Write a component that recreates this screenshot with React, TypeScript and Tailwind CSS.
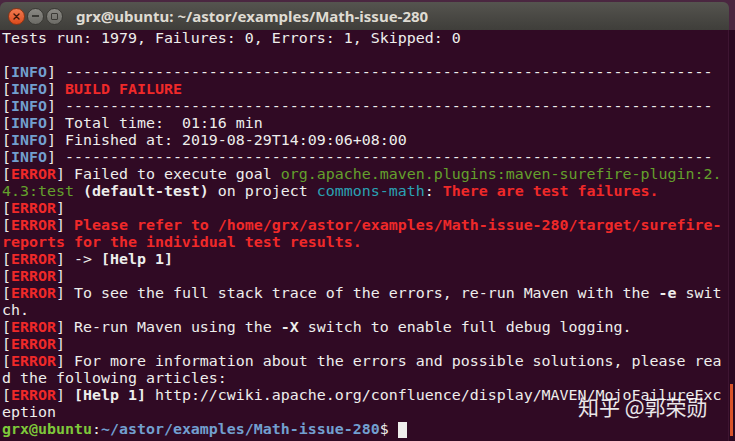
import React from 'react';

type Seg = { t: string; c?: string };

const W = 'text-[#eeeeec]';
const B = 'text-[#eeeeec] font-bold';
const INFO = 'text-[#729fcf] font-bold';
const RED = 'text-[#ef2929] font-bold';
const GREEN = 'text-[#64a02c]';
const CYAN = 'text-[#2aa1b3]';
const PGREEN = 'text-[#7ec83a] font-bold';

const dashes = '-'.repeat(72);

const info = (rest: Seg[]): Seg[] => [{ t: '[' }, { t: 'INFO', c: INFO }, { t: '] ' }, ...rest];
const err = (rest: Seg[]): Seg[] => [{ t: '[' }, { t: 'ERROR', c: RED }, { t: ']' + (rest.length ? ' ' : '') }, ...rest];

const lines: Seg[][] = [
  [{ t: 'Tests run: 1979, Failures: 0, Errors: 1, Skipped: 0' }],
  [],
  info([{ t: dashes }]),
  info([{ t: 'BUILD FAILURE', c: RED }]),
  info([{ t: dashes }]),
  info([{ t: 'Total time:  01:16 min' }]),
  info([{ t: 'Finished at: 2019-08-29T14:09:06+08:00' }]),
  info([{ t: dashes }]),
  err([{ t: 'Failed to execute goal ' }, { t: 'org.apache.maven.plugins:maven-surefire-plugin:2.', c: GREEN }]),
  [
    { t: '4.3:test', c: GREEN },
    { t: ' ' },
    { t: '(default-test)', c: B },
    { t: ' on project ' },
    { t: 'commons-math', c: CYAN },
    { t: ': ' },
    { t: 'There are test failures.', c: RED },
  ],
  err([]),
  err([{ t: 'Please refer to /home/grx/astor/examples/Math-issue-280/target/surefire-', c: RED }]),
  [{ t: 'reports for the individual test results.', c: RED }],
  err([{ t: '-> ' }, { t: '[Help 1]', c: B }]),
  err([]),
  err([
    { t: 'To see the full stack trace of the errors, re-run Maven with the ' },
    { t: '-e', c: B },
    { t: ' swit' },
  ]),
  [{ t: 'ch.' }],
  err([{ t: 'Re-run Maven using the ' }, { t: '-X', c: B }, { t: ' switch to enable full debug logging.' }]),
  err([]),
  err([{ t: 'For more information about the errors and possible solutions, please rea' }]),
  [{ t: 'd the following articles:' }],
  err([{ t: '[Help 1]', c: B }, { t: ' http://cwiki.apache.org/confluence/display/MAVEN/MojoFailureExc' }]),
  [{ t: 'eption' }],
];

const WindowButton = ({ close }: { close?: boolean }) => (
  <div
    className={
      close
        ? 'w-[17px] h-[17px] rounded-full bg-gradient-to-b from-[#f07a4f] to-[#dd4a1a] border border-[#8e3414] flex items-center justify-center'
        : 'w-[17px] h-[17px] rounded-full bg-gradient-to-b from-[#8a8984] to-[#6c6b66] border border-[#3a3935] flex items-center justify-center'
    }
  >
    {close ? (
      <svg width="7" height="7" viewBox="0 0 7 7">
        <path d="M1 1L6 6M6 1L1 6" stroke="#3a160a" strokeWidth="1.4" strokeLinecap="round" />
      </svg>
    ) : null}
  </div>
);

export default function App() {
  return (
    <div className="w-[735px] h-[441px] overflow-hidden bg-[#4a2640] pt-[2px] flex flex-col">
      {/* title bar */}
      <div className="h-[28px] shrink-0 rounded-t-[6px] bg-gradient-to-b from-[#55544f] to-[#3f3e3a] flex items-center pl-[8px] mr-[6px]">
        <div className="flex items-center gap-[2px]">
          <WindowButton close />
          <div className="w-[17px] h-[17px] rounded-full bg-gradient-to-b from-[#8a8984] to-[#6c6b66] border border-[#3a3935] flex items-center justify-center">
            <div className="w-[7px] h-[1.5px] bg-[#3a3935]" />
          </div>
          <div className="w-[17px] h-[17px] rounded-full bg-gradient-to-b from-[#8a8984] to-[#6c6b66] border border-[#3a3935] flex items-center justify-center">
            <div className="w-[7px] h-[7px] border border-[#3a3935] rounded-[1px]" />
          </div>
        </div>
        <div
          className="ml-[13px] text-[15px] font-bold text-[#dfdbd2] whitespace-pre"
          style={{ fontFamily: '"Noto Sans", "Open Sans", sans-serif' }}
        >
          grx@ubuntu: ~/astor/examples/Math-issue-280
        </div>
      </div>

      {/* terminal body */}
      <div className="flex flex-1 min-h-0">
        <div
          className="relative flex-1 bg-[#300a24] pl-[2px] text-[14.95px] leading-[17px] text-[#eeeeec] whitespace-pre"
          style={{ fontFamily: '"DejaVu Sans Mono", monospace' }}
        >
          {lines.map((segs, i) => (
            <div key={i} className="h-[17px]">
              {segs.map((s, j) => (
                <span key={j} className={s.c ?? W}>
                  {s.t}
                </span>
              ))}
            </div>
          ))}
          <div className="h-[17px] flex items-center">
            <span className={PGREEN}>grx@ubuntu</span>
            <span className={W}>:</span>
            <span className={INFO}>~/astor/examples/Math-issue-280</span>
            <span className={W}>$ </span>
            <span className="inline-block w-[9px] h-[16px] bg-[#eeeeec]" />
          </div>

          {/* watermark */}
          <div
            className="absolute left-[578px] top-[366px] text-[21px] leading-none text-white/90 whitespace-pre"
            style={{ fontFamily: '"Noto Sans CJK SC", "Noto Sans", sans-serif' }}
          >
            知乎 @郭荣勋
          </div>
        </div>

        {/* scrollbar */}
        <div className="w-[7px] bg-[#2a0820] border-l border-[#3e1532] flex flex-col justify-end pb-[5px]">
          <div className="ml-[1px] w-[3px] h-[52px] bg-[#d9542a]" />
        </div>
      </div>
    </div>
  );
}
